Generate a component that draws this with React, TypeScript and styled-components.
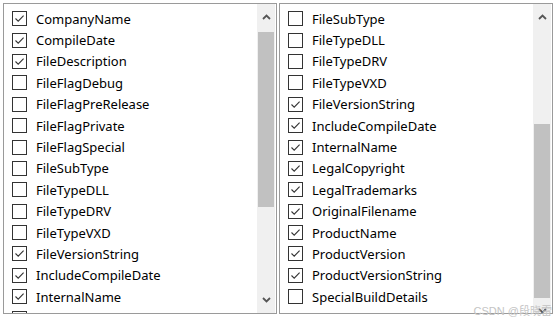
import React from "react";
import styled, { createGlobalStyle } from "styled-components";

const GlobalStyle = createGlobalStyle`
  html, body {
    margin: 0;
    padding: 0;
    background: #fff;
  }
  body {
    font-family: "Noto Sans", "Open Sans", sans-serif;
  }
`;

const Page = styled.div`
  display: flex;
  gap: 2px;
  padding: 3px 0 0 3px;
  width: 555px;
  height: 321px;
  box-sizing: border-box;
  position: relative;
`;

const ListBox = styled.div`
  display: flex;
  width: 274px;
  height: 311px;
  box-sizing: border-box;
  border: 1px solid #9a9a9a;
  background: #fff;
  overflow: hidden;
`;

const Items = styled.div`
  flex: 1;
  display: flex;
  flex-direction: column;
  padding-top: 4px;
  overflow: hidden;
`;

const Row = styled.div`
  flex: 0 0 21.4px;
  display: flex;
  align-items: center;
  padding-left: 8px;
  gap: 9px;
  font-size: 13px;
  color: #000;
  white-space: nowrap;
`;

const Box = styled.span`
  flex: 0 0 auto;
  width: 13px;
  height: 13px;
  border: 1px solid #333;
  background: #fff;
  display: flex;
  align-items: center;
  justify-content: center;
`;

const ScrollBar = styled.div`
  flex: 0 0 18px;
  display: flex;
  flex-direction: column;
  background: #f0f0f0;
  margin-right: 1px;
`;

const Arrow = styled.div`
  flex: 0 0 26px;
  display: flex;
  align-items: center;
  justify-content: center;
`;

const Track = styled.div`
  flex: 1;
  display: flex;
  flex-direction: column;
`;

const Thumb = styled.div<{ $top: number; $height: number }>`
  margin-top: ${(p) => p.$top}px;
  height: ${(p) => p.$height}px;
  margin-left: 1px;
  margin-right: 1px;
  background: #c1c1c1;
`;

const Watermark = styled.div`
  position: absolute;
  right: 3px;
  bottom: 3px;
  font-size: 11px;
  color: #c4c4c4;
  font-family: "Liberation Sans", "Noto Sans CJK SC", sans-serif;
`;

const Check = () => (
  <svg width="11" height="11" viewBox="0 0 11 11">
    <path d="M1.5 5.5 L4.2 8.2 L9.6 2.6" fill="none" stroke="#333" strokeWidth="1.1" />
  </svg>
);

const Chevron = ({ down }: { down?: boolean }) => (
  <svg width="9" height="6" viewBox="0 0 9 6">
    <path
      d={down ? "M1 1 L4.5 4.5 L8 1" : "M1 5 L4.5 1.5 L8 5"}
      fill="none"
      stroke="#555"
      strokeWidth="1.8"
    />
  </svg>
);

type Item = [string, boolean];

const left: Item[] = [
  ["CompanyName", true],
  ["CompileDate", true],
  ["FileDescription", true],
  ["FileFlagDebug", false],
  ["FileFlagPreRelease", false],
  ["FileFlagPrivate", false],
  ["FileFlagSpecial", false],
  ["FileSubType", false],
  ["FileTypeDLL", false],
  ["FileTypeDRV", false],
  ["FileTypeVXD", false],
  ["FileVersionString", true],
  ["IncludeCompileDate", true],
  ["InternalName", true],
  ["LegalCopyright", true],
];

const right: Item[] = [
  ["FileSubType", false],
  ["FileTypeDLL", false],
  ["FileTypeDRV", false],
  ["FileTypeVXD", false],
  ["FileVersionString", true],
  ["IncludeCompileDate", true],
  ["InternalName", true],
  ["LegalCopyright", true],
  ["LegalTrademarks", true],
  ["OriginalFilename", true],
  ["ProductName", true],
  ["ProductVersion", true],
  ["ProductVersionString", true],
  ["SpecialBuildDetails", false],
];

const CheckList = ({ items, thumbTop, thumbHeight }: { items: Item[]; thumbTop: number; thumbHeight: number }) => (
  <ListBox>
    <Items>
      {items.map(([name, on], i) => (
        <Row key={i}>
          <Box>{on && <Check />}</Box>
          {name}
        </Row>
      ))}
    </Items>
    <ScrollBar>
      <Arrow>
        <Chevron />
      </Arrow>
      <Track>
        <Thumb $top={thumbTop} $height={thumbHeight} />
      </Track>
      <Arrow>
        <Chevron down />
      </Arrow>
    </ScrollBar>
  </ListBox>
);

export default function App() {
  return (
    <>
      <GlobalStyle />
      <Page>
        <CheckList items={left} thumbTop={2} thumbHeight={175} />
        <CheckList items={right} thumbTop={94} thumbHeight={174} />
        <Watermark>CSDN @段晓雷</Watermark>
      </Page>
    </>
  );
}
